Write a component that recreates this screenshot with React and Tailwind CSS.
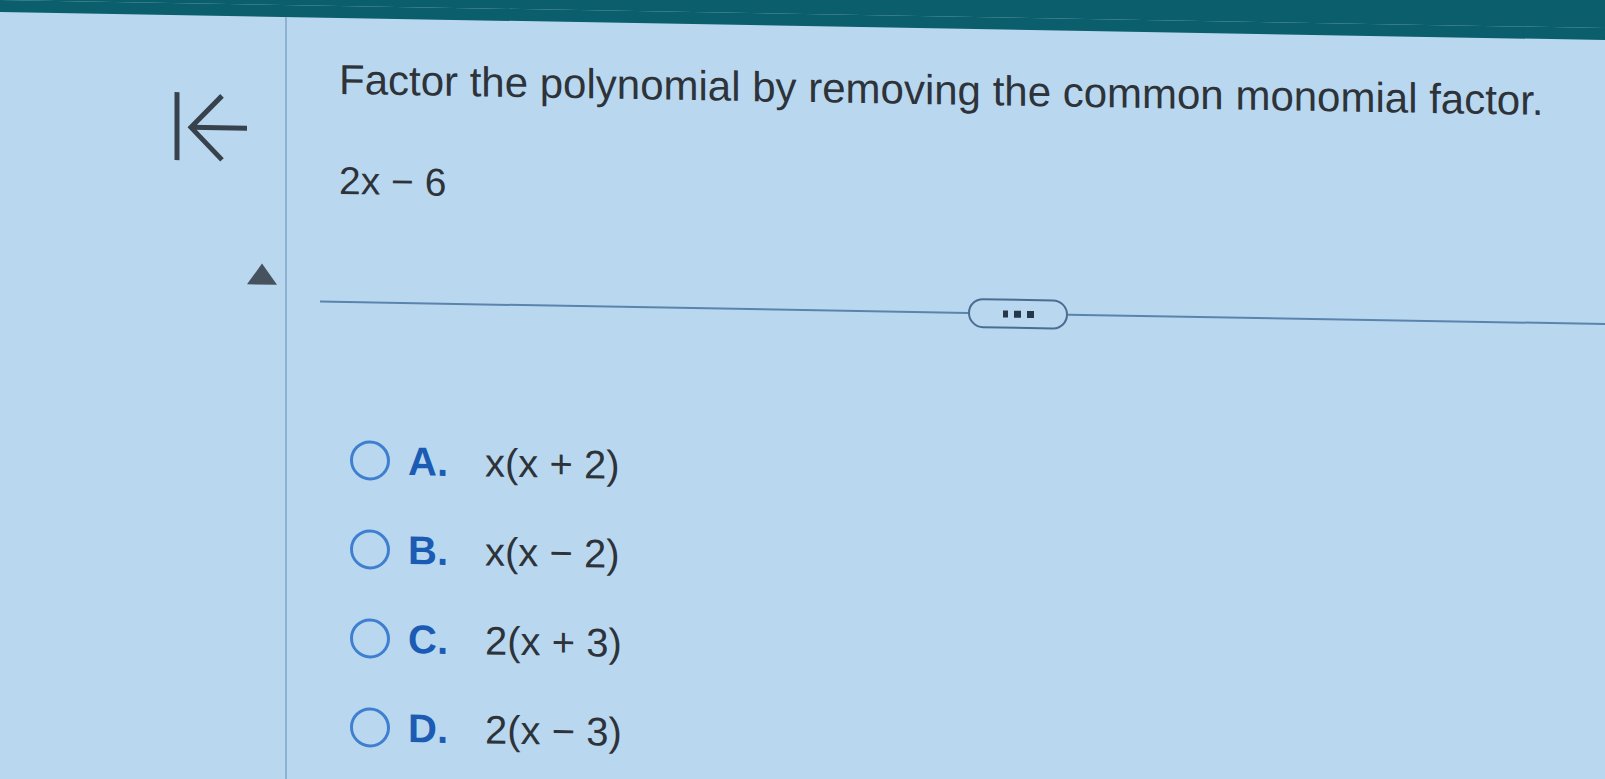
import React from 'react'

const options = [
  { letter: 'A.', value: 'x(x + 2)' },
  { letter: 'B.', value: 'x(x − 2)' },
  { letter: 'C.', value: '2(x + 3)' },
  { letter: 'D.', value: '2(x − 3)' },
]

const BackIcon = () => (
  <svg width="80" height="76" viewBox="0 0 80 76" fill="none" stroke="#38424d" strokeWidth="5">
    <path d="M7 3v68" />
    <path d="M21 38h56" />
    <path d="M52 6L21 38l31 32" />
  </svg>
)

const App = () => {
  return (
    <div className="w-[1605px] h-[779px] overflow-hidden bg-[#0b5e6b] font-['Liberation_Sans',Arial,sans-serif] text-[#2e333a]">
      {/* the photo is taken at a slight angle */}
      <div className="w-[1605px] h-[800px] skew-y-1 origin-top-left bg-[#b9d8ef] flex flex-col">
        <div className="h-[12px] shrink-0 bg-[#0b5e6b]" />

        <div className="flex flex-1">
          <div className="w-[287px] shrink-0 border-r-2 border-[#8eb2d3] flex flex-col">
            <div className="ml-[170px] mt-[74px]">
              <BackIcon />
            </div>
            <div className="ml-[247px] mt-[97px] w-0 h-0 border-l-[15px] border-r-[15px] border-b-[21px] border-l-transparent border-r-transparent border-b-[#46525e]" />
          </div>

          <div className="flex-1 flex flex-col pt-[38px]">
            <div className="pl-[52px] text-[42px] leading-[48px] whitespace-nowrap">
              Factor the polynomial by removing the common monomial factor.
            </div>
            <div className="pl-[52px] mt-[54px] text-[39px] leading-[46px]">2x − 6</div>

            <div className="mt-[83px] pl-[33px] flex items-center">
              <div className="w-[648px] h-[2px] bg-[#5a84ad]" />
              <button className="w-[100px] h-[30px] rounded-full border-2 border-[#4b6d92] flex items-center justify-center gap-[6px]">
                <span className="w-[5px] h-[7px] bg-[#26374a]" />
                <span className="w-[7px] h-[7px] bg-[#26374a]" />
                <span className="w-[7px] h-[7px] bg-[#26374a]" />
              </button>
              <div className="flex-1 h-[2px] bg-[#5a84ad]" />
            </div>

            <div className="mt-[121px] pl-[63px] flex flex-col gap-[45px]">
              {options.map((o) => (
                <div key={o.letter} className="flex items-center h-[44px]">
                  <div className="w-[40px] h-[40px] rounded-full border-[3px] border-[#3f7fd0]" />
                  <div className="ml-[18px] w-[77px] text-[40px] font-bold text-[#1c5bb3]">{o.letter}</div>
                  <div className="text-[40px]">{o.value}</div>
                </div>
              ))}
            </div>
          </div>
        </div>
      </div>
    </div>
  )
}

export default App
